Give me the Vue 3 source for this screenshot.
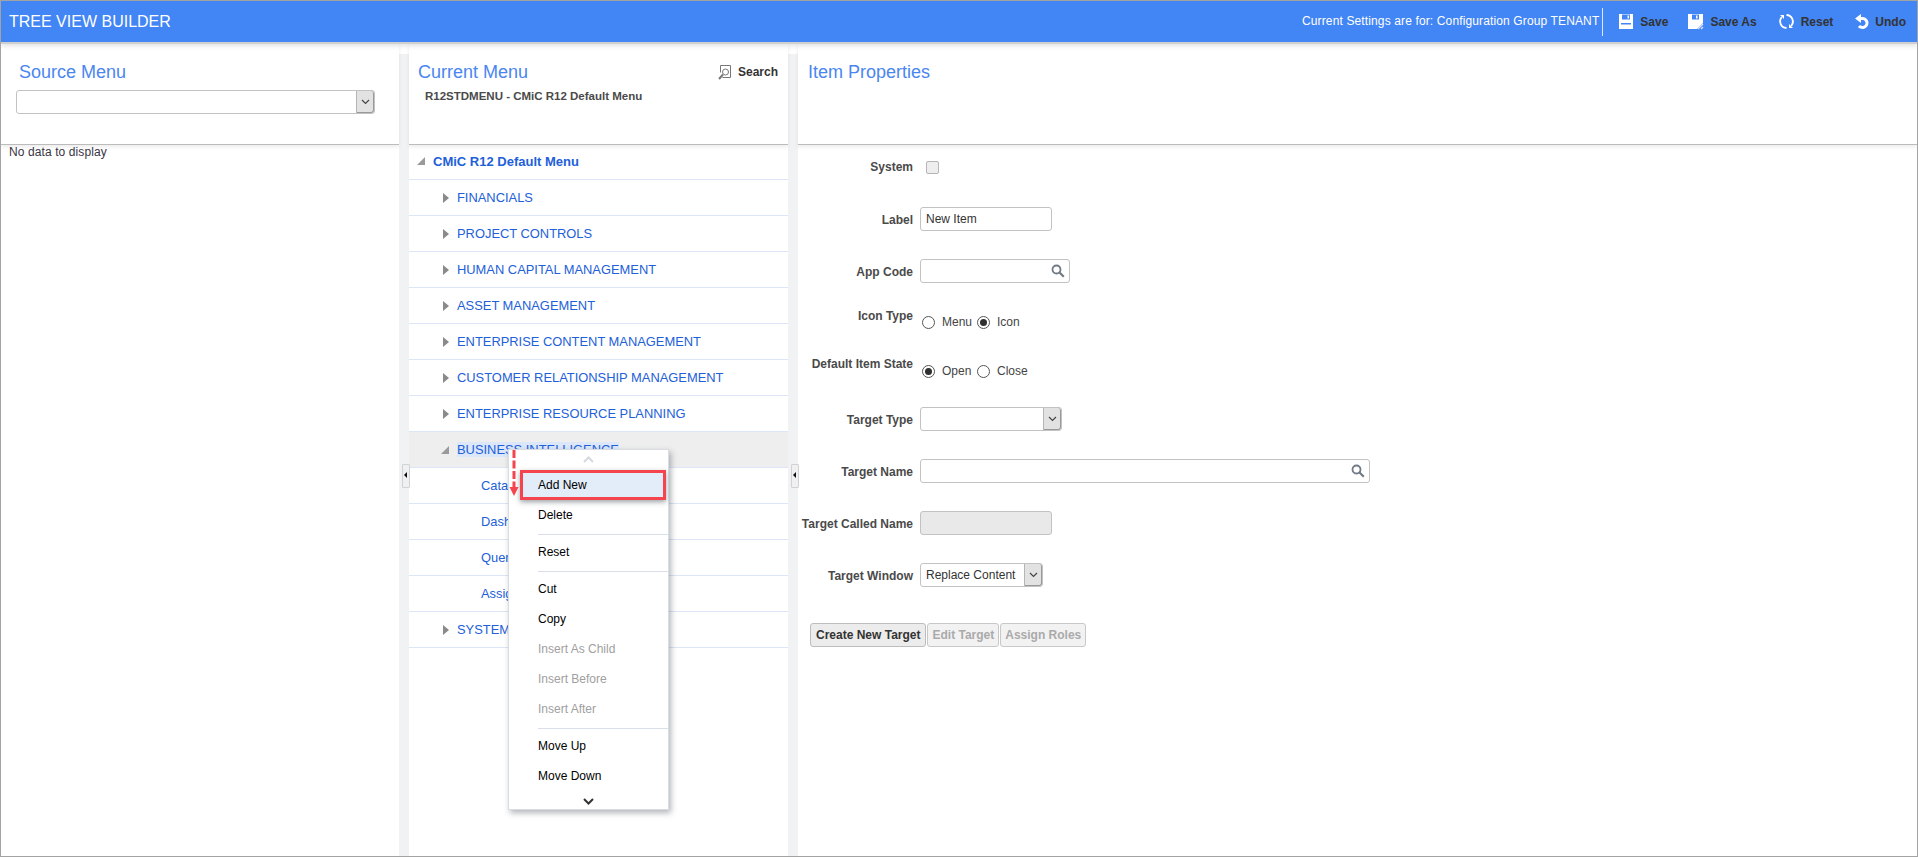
<script setup>
const topItems = ['FINANCIALS','PROJECT CONTROLS','HUMAN CAPITAL MANAGEMENT','ASSET MANAGEMENT','ENTERPRISE CONTENT MANAGEMENT','CUSTOMER RELATIONSHIP MANAGEMENT','ENTERPRISE RESOURCE PLANNING']
const children = ['Catalog','Dashboards','Queries','Assign Roles']
const menu = [
  { t: 'Add New', hl: true }, { t: 'Delete', sep: true }, { t: 'Reset', sep: true }, { t: 'Cut' }, { t: 'Copy' },
  { t: 'Insert As Child', off: true }, { t: 'Insert Before', off: true }, { t: 'Insert After', off: true, sep: true },
  { t: 'Move Up' }, { t: 'Move Down' }
]
</script>

<template>
  <div class="app">
    <header class="bar">
      <div class="brand">TREE VIEW BUILDER</div>
      <div class="tools">
        <span class="settings">Current Settings are for: Configuration Group TENANT</span>
        <button class="tool save">
          <svg width="16" height="17" viewBox="0 0 16 17"><path fill="#fff" d="M1 1h14v15H1z"/><path fill="#4285f4" d="M4 1.500h8v5H4zM3 10h10v1.400H3z"/><path fill="#fff" d="M9.500 2.500h1.600v3H9.500z"/></svg>
          Save
        </button>
        <button class="tool saveas">
          <svg width="17" height="17" viewBox="0 0 17 17"><path fill="#fff" d="M1 1h15v9l-6 6H1z"/><path fill="#4285f4" d="M5 1.500h7v5H5z"/><path fill="#fff" d="M9 2.500h1.500v3H9z"/><path stroke="#dbe7fd" stroke-width="1.200" fill="none" d="M11 16l5-5M14 16l2-2"/></svg>
          Save As
        </button>
        <button class="tool reset">
          <svg width="17" height="17" viewBox="0 0 17 17" fill="none" stroke="#fff" stroke-width="1.800"><path d="M3.800 4.200A6.500 6.500 0 0 0 8.500 15"/><path d="M13.200 12.800A6.500 6.500 0 0 0 8.500 2"/><path d="M2 2h4v4zM15 15h-4v-4z" fill="#fff" stroke="none"/></svg>
          Reset
        </button>
        <button class="tool undo">
          <svg width="15" height="17" viewBox="0 0 15 17"><path fill="#fff" d="M1 5.500 7 1v3h1.500a6 6 0 1 1-4.600 9.900l2.300-2a3 3 0 1 0 2.300-4.900H7v3z"/></svg>
          Undo
        </button>
      </div>
    </header>

    <main class="columns">
      <section class="panel source">
        <div class="panel-head">
          <h2>Source Menu</h2>
          <div class="select wide"><span class="sel-btn"><svg width="9" height="6" viewBox="0 0 9 6" fill="none" stroke="#444" stroke-width="1.200"><path d="M1 1l3.500 3.500L8 1"/></svg></span></div>
        </div>
        <div class="empty">No data to display</div>
      </section>

      <div class="split"></div>

      <section class="panel current">
        <div class="panel-head">
          <div class="title-row">
            <h2>Current Menu</h2>
            <span class="search">
              <svg width="14" height="16" viewBox="0 0 14 16" fill="none" stroke="#777"><path d="M2.500 1.500h10v12h-8"/><circle cx="7.500" cy="8" r="3"/><path d="M5 10.500 1 15" stroke-width="2"/><path d="M2.500 1.500v7"/></svg>
              Search
            </span>
          </div>
          <div class="sub">R12STDMENU - CMiC R12 Default Menu</div>
        </div>
        <ul class="tree">
          <li class="node root"><i class="tri-open"></i><a>CMiC R12 Default Menu</a></li>
          <li v-for="t in topItems" :key="t" class="node"><i class="tri"></i><a>{{ t }}</a></li>
          <li class="node active"><i class="tri-open"></i><a class="picked">BUSINESS INTELLIGENCE</a></li>
          <li v-for="c in children" :key="c" class="node child"><a>{{ c }}</a></li>
          <li class="node"><i class="tri"></i><a>SYSTEM ADMINISTRATION</a></li>
        </ul>
      </section>

      <div class="split"></div>

      <section class="panel props">
        <div class="panel-head"><h2>Item Properties</h2></div>
        <form class="form">
          <div class="row first"><label>System</label><span class="check"></span></div>
          <div class="row"><label>Label</label><div class="input w132">New Item</div></div>
          <div class="row"><label>App Code</label><div class="input w150"><svg class="mag" width="14" height="14" viewBox="0 0 14 14" fill="none" stroke="#6f7a85"><circle cx="5.500" cy="5.500" r="4" stroke-width="1.800"/><path d="M8.500 8.500l4.300 4.300" stroke-width="2.200"/></svg></div></div>
          <div class="row radios r-icon"><label>Icon Type</label><span class="opt"><i class="radio"></i>Menu</span><span class="opt"><i class="radio on"></i>Icon</span></div>
          <div class="row radios r-state"><label>Default Item State</label><span class="opt"><i class="radio on"></i>Open</span><span class="opt"><i class="radio"></i>Close</span></div>
          <div class="row r-type"><label>Target Type</label><div class="select w142"><span class="sel-btn"><svg width="9" height="6" viewBox="0 0 9 6" fill="none" stroke="#444" stroke-width="1.200"><path d="M1 1l3.500 3.500L8 1"/></svg></span></div></div>
          <div class="row"><label>Target Name</label><div class="input w450"><svg class="mag" width="14" height="14" viewBox="0 0 14 14" fill="none" stroke="#6f7a85"><circle cx="5.500" cy="5.500" r="4" stroke-width="1.800"/><path d="M8.500 8.500l4.300 4.300" stroke-width="2.200"/></svg></div></div>
          <div class="row"><label>Target Called Name</label><div class="input w132 disabled"></div></div>
          <div class="row"><label>Target Window</label><div class="select w123"><span class="sel-val">Replace Content</span><span class="sel-btn"><svg width="9" height="6" viewBox="0 0 9 6" fill="none" stroke="#444" stroke-width="1.200"><path d="M1 1l3.500 3.500L8 1"/></svg></span></div></div>
          <div class="buttons">
            <button type="button" class="btn primary">Create New Target</button>
            <button type="button" class="btn">Edit Target</button>
            <button type="button" class="btn">Assign Roles</button>
          </div>
        </form>
      </section>
    </main>

    <span class="handle h1"><i></i></span>
    <span class="handle h2"><i></i></span>

    <div class="ctx">
      <div class="up"><svg width="11" height="7" viewBox="0 0 11 7" fill="none" stroke="#d5d9de" stroke-width="2"><path d="M1 6l4.500-4.500L10 6"/></svg></div>
      <template v-for="m in menu" :key="m.t">
        <div class="ctx-item" :class="{ hl: m.hl, off: m.off }">{{ m.t }}</div>
        <div v-if="m.sep" class="ctx-sep"></div>
      </template>
      <div class="down"><svg width="11" height="7" viewBox="0 0 11 7" fill="none" stroke="#333" stroke-width="2"><path d="M1 1l4.500 4.500L10 1"/></svg></div>
    </div>

    <svg class="arrow" width="10" height="48" viewBox="0 0 10 48"><path d="M5 0v38" stroke="#f4444e" stroke-width="3" stroke-dasharray="8 2.500" fill="none"/><path d="M0.500 37h9L5 46z" fill="#f4444e"/></svg>
  </div>
</template>

<style>
html, body { margin: 0; overflow: hidden; background: #fff; }
</style>

<style scoped>
.app {
  position: relative; box-sizing: border-box; width: 1918px; height: 857px;
  border: 1px solid #a3a3a3; display: flex; flex-direction: column; overflow: hidden;
  font-family: "Liberation Sans", Arial, sans-serif; font-size: 12px; color: #333; background: #fff;
}
.bar {
  height: 41px; flex: none; background: #4285f4; display: flex; align-items: center; justify-content: space-between;
  border-bottom: 2px solid #cfcfcf; box-shadow: 0 2px 5px rgba(0,0,0,.12); z-index: 2;
}
.brand { color: #fff; font-size: 16px; margin-left: 8px; }
.tools { display: flex; align-items: center; height: 28px; }
.settings { color: #fff; height: 28px; line-height: 27px; padding-right: 3px; border-right: 1px solid #dbe7fd; margin-right: 15px; letter-spacing: .13px; }
.tool {
  border: 0; background: none; padding: 0; display: inline-flex; align-items: center; gap: 6px;
  font: bold 12px "Liberation Sans", Arial, sans-serif; color: #333;
}
.tool.save { margin-right: 19px; }
.tool.saveas { margin-right: 21px; }
.tool.reset { margin-right: 21px; }
.tool.undo { margin-right: 11px; }

.columns { flex: 1; display: flex; min-height: 0; }
.panel { display: flex; flex-direction: column; min-width: 0; }
.source { width: 398px; }
.current { width: 379px; }
.props { flex: 1; }
.split { width: 10px; flex: none; background: #f0f2f3; margin-top: 10px; }
.panel-head {
  height: 101px; flex: none; box-sizing: border-box; border-bottom: 1px solid #bcbcbc; position: relative;
  box-shadow: 0 2px 4px rgba(0,0,0,.08); padding-top: 17px;
}
h2 { margin: 0; font-weight: 400; font-size: 18px; line-height: 22px; color: #4a86f0; }
.source h2 { margin-left: 18px; }
.current h2 { margin-left: 9px; }
.props h2 { margin-left: 10px; }
.select {
  box-sizing: border-box; height: 24px; border: 1px solid #c2c2c2; border-radius: 3px; background: #fff;
  display: flex; align-items: stretch; justify-content: flex-end;
}
.select.wide { width: 359px; margin: 7px 0 0 15px; }
.sel-btn {
  width: 16px; background: #e2e2e2; border-left: 1px solid #b5b5b5; border-right: 1px solid #999; border-bottom: 1px solid #999;
  border-radius: 0 3px 3px 0; display: flex; align-items: center; justify-content: center; flex: none;
}
.sel-val { flex: 1; padding-left: 5px; line-height: 23px; color: #333; white-space: nowrap; }
.empty { padding: 0 0 0 8px; line-height: 14px; color: #3a3344; letter-spacing: .1px; }
.title-row { display: flex; justify-content: space-between; align-items: center; }
.search { display: inline-flex; align-items: center; gap: 6px; font-weight: 700; margin-right: 10px; color: #333; }
.sub { font-weight: 700; font-size: 11.5px; color: #4a4a4a; margin: 5px 0 0 16px; line-height: 16px; }

.tree { list-style: none; margin: 0; padding: 0; }
.node {
  box-sizing: border-box; height: 36px; border-bottom: 1px solid #dce6f6; display: flex; align-items: center; padding-left: 34px;
  color: #2260d9; font-size: 12.9px;
}
.node a { color: #2260d9; }
.root { height: 35px; padding-left: 8px; padding-bottom: 2px; font-weight: 700; font-size: 13px; }
.root a { margin-left: 8px; }
.node .tri { width: 0; height: 0; border-left: 6px solid #8a8a8a; border-top: 5px solid transparent; border-bottom: 5px solid transparent; margin-right: 8px; }
.tri-open { width: 0; height: 0; border-bottom: 8px solid #9a9a9a; border-left: 8px solid transparent; }
.active { background: #eeeeee; }
.active .tri-open { margin-right: 8px; margin-left: -2px; }
.picked { background: #dce8fa; }
.child { padding-left: 72px; }

.form { display: flex; flex-direction: column; align-items: flex-start; }
.row { display: flex; align-items: center; height: 24px; margin-top: 28px; color: #333; }
.row.first { margin-top: 10px; }
.row label { width: 115px; margin: 2px 7px 0 0; text-align: right; font-weight: 700; color: #4a4a4a; white-space: nowrap; flex: none; }
.row.first label { margin-top: 0; }
.r-icon label { margin-top: 0; margin-bottom: 13px; }
.r-state label { margin-top: 0; margin-bottom: 15px; }
.r-icon { margin-top: 27px; }
.r-state { margin-top: 25px; }
.r-type { margin-top: 24px; }
.check { box-sizing: border-box; width: 13px; height: 13px; border: 1px solid #b5b5b5; border-radius: 2px; background: #eee; margin-left: 6px; }
.input { box-sizing: border-box; height: 24px; border: 1px solid #c2c2c2; border-radius: 3px; background: #fff; padding-left: 5px; line-height: 22px; position: relative; }
.w132 { width: 132px; } .w150 { width: 150px; } .w450 { width: 450px; } .w142 { width: 142px; } .w123 { width: 123px; }
.disabled { background: #e9e9e9; }
.mag { position: absolute; right: 4px; top: 4px; }
.opt { display: inline-flex; align-items: center; width: 55px; padding-left: 2px; box-sizing: border-box; color: #444; }
.radio { box-sizing: border-box; width: 13px; height: 13px; border: 1px solid #555; border-radius: 50%; margin-right: 7px; background: #fff; display: inline-block; position: relative; flex: none; }
.radio.on::after { content: ""; position: absolute; left: 2px; top: 2px; width: 7px; height: 7px; border-radius: 50%; background: #2f2f2f; }
.buttons { display: flex; margin: 36px 0 0 12px; gap: 1px; }
.btn {
  box-sizing: border-box; height: 24px; padding: 0 4px; border: 1px solid #c8c8c8; border-radius: 3px; background: #f2f2f2;
  font: bold 12px "Liberation Sans", Arial, sans-serif; color: #aaa; white-space: nowrap;
}
.btn.primary { background: #ececec; color: #333; border-color: #bdbdbd; padding: 0 5px; }

.handle { position: absolute; top: 463px; width: 6px; height: 22px; background: #f0f0f0; border: 1px solid #cfd3d6; border-radius: 1px; z-index: 3; }
.handle i { position: absolute; left: 1px; top: 7px; width: 0; height: 0; border-right: 3px solid #111; border-top: 3px solid transparent; border-bottom: 3px solid transparent; }
.h1 { left: 401px; }
.h2 { left: 790px; }

.ctx {
  position: absolute; left: 507px; top: 448px; width: 161px; height: 361px; box-sizing: border-box; background: #fff;
  border: 1px solid #d8dde3; box-shadow: 2px 3px 6px rgba(60,70,80,.4); z-index: 5; color: #000;
}
.up { height: 20px; text-align: center; padding-top: 6px; box-sizing: border-box; line-height: 0; }
.down { text-align: center; line-height: 0; position: absolute; left: 0; right: 0; bottom: 4px; }
.ctx-item { height: 30px; line-height: 29px; padding-left: 29px; }
.ctx-item.hl {
  box-sizing: border-box; margin: 0 2px 1px 11px; padding-left: 15px; border: 3px solid #f4444e; background: #e3edfa; line-height: 24px;
  box-shadow: 0 2px 5px rgba(60,70,80,.5);
}
.ctx-item.off { color: #a0a0a0; }
.ctx-sep { height: 1px; background: #d9dfe9; margin: 3px 0 3px 29px; }
.arrow { position: absolute; left: 508px; top: 449px; z-index: 6; }
</style>
